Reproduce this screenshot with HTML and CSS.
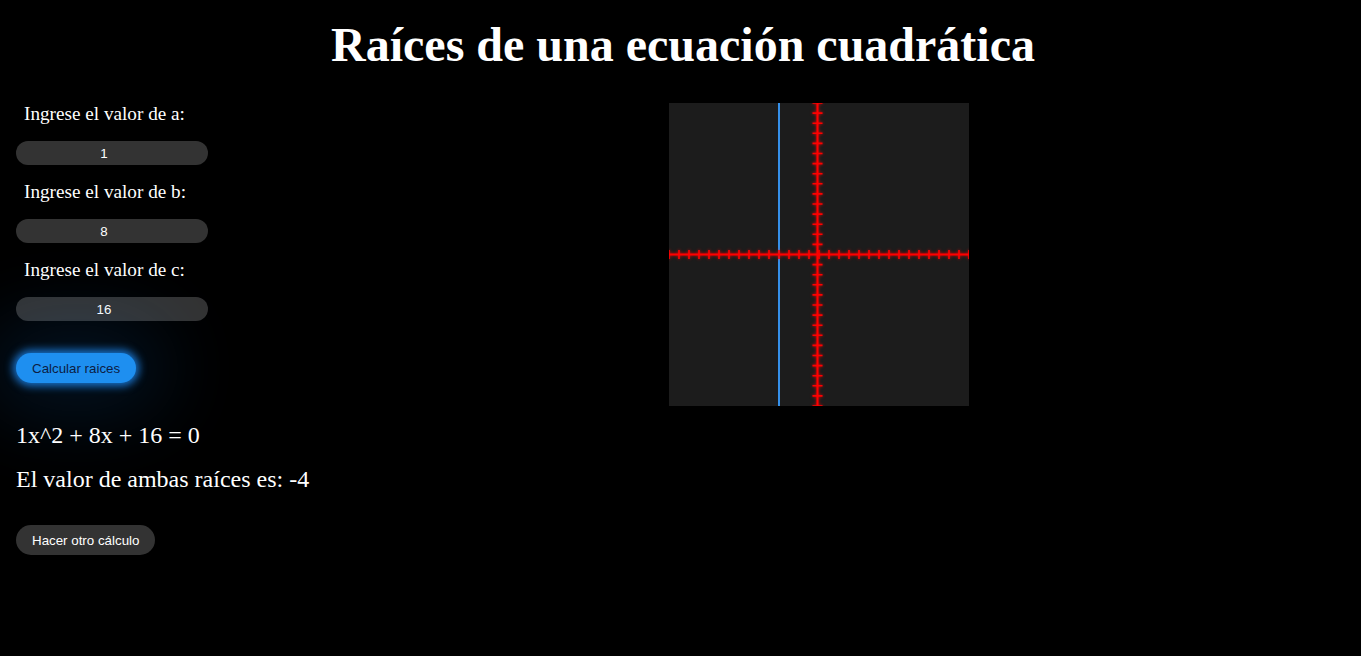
FILE: index.html
```html
<!DOCTYPE html>
<html lang="es">
<head>
<meta charset="utf-8">
<title>Raíces de una ecuación cuadrática</title>
<link rel="stylesheet" href="styles.css">
</head>
<body>
<h1 class="title">Raíces de una ecuación cuadrática</h1>
<div class="main">
  <div class="form">
    <label class="label">Ingrese el valor de a:</label>
    <input class="field" type="text" value="1">
    <label class="label">Ingrese el valor de b:</label>
    <input class="field" type="text" value="8">
    <label class="label">Ingrese el valor de c:</label>
    <input class="field" type="text" value="16">
    <button class="btn btn-calc">Calcular raices</button>
    <p class="eq">1x^2 + 8x + 16 = 0</p>
    <p class="result">El valor de ambas raíces es: -4</p>
    <button class="btn btn-again">Hacer otro cálculo</button>
  </div>
  <svg class="plot" width="300" height="303" viewBox="0 0 300 303">
    <rect class="plot-bg" x="0" y="0" width="300" height="303"/>
    <line class="root" x1="110" y1="0" x2="110" y2="303"/>
    <g class="axes">
      <line x1="0" y1="151.5" x2="300" y2="151.5"/>
      <line x1="148.5" y1="0" x2="148.5" y2="303"/>
      <path class="ticks" d="M0 147v9M10 147v9M20 147v9M30 147v9M40 147v9M50 147v9M60 147v9M70 147v9M80 147v9M90 147v9M100 147v9M110 147v9M120 147v9M130 147v9M140 147v9M150 147v9M160 147v9M170 147v9M180 147v9M190 147v9M200 147v9M210 147v9M220 147v9M230 147v9M240 147v9M250 147v9M260 147v9M270 147v9M280 147v9M290 147v9M300 147v9"/>
      <path class="ticks" d="M143.5 0h10M143.5 10.1h10M143.5 20.2h10M143.5 30.3h10M143.5 40.4h10M143.5 50.5h10M143.5 60.6h10M143.5 70.7h10M143.5 80.8h10M143.5 90.9h10M143.5 101h10M143.5 111.1h10M143.5 121.2h10M143.5 131.3h10M143.5 141.4h10M143.5 161.6h10M143.5 171.7h10M143.5 181.8h10M143.5 191.9h10M143.5 202h10M143.5 212.1h10M143.5 222.2h10M143.5 232.3h10M143.5 242.4h10M143.5 252.5h10M143.5 262.6h10M143.5 272.7h10M143.5 282.8h10M143.5 292.9h10M143.5 303h10"/>
    </g>
  </svg>
</div>
</body>
</html>
```

FILE: styles.css
```css
html, body {
  margin: 0;
  padding: 0;
  background: #000;
  color: #fff;
  font-family: "Liberation Serif", "Times New Roman", serif;
}

.title {
  margin: 0;
  padding-top: 15px;
  padding-left: 5px;
  font-size: 48px;
  line-height: 60px;
  font-weight: bold;
  text-align: center;
}

.main {
  display: flex;
  align-items: flex-start;
  margin-top: 28px;
  padding-left: 16px;
}

.form {
  display: flex;
  flex-direction: column;
  align-items: flex-start;
  width: 320px;
  flex: none;
}

.label {
  font-size: 19.2px;
  line-height: 22px;
  padding-left: 8px;
  margin-bottom: 16px;
}

.field {
  box-sizing: border-box;
  width: 192px;
  height: 24px;
  margin: 0 0 16px 0;
  padding: 0 16px 0 0;
  border: none;
  border-radius: 12px;
  background: #333;
  color: #fff;
  font-family: "Liberation Sans", Arial, sans-serif;
  font-size: 13.333px;
  text-align: center;
  outline: none;
}

.btn {
  height: 30px;
  padding: 0 16px;
  border: none;
  border-radius: 15px;
  font-family: "Liberation Sans", Arial, sans-serif;
  font-size: 13.333px;
  cursor: pointer;
}

.btn-calc {
  margin-top: 16px;
  background: #1e8ff0;
  color: #0c1d44;
  box-shadow: 0 0 8px 3px rgba(30, 144, 255, 0.8), 0 0 80px 30px rgba(30, 144, 255, 0.14);
}

.btn-again {
  margin-top: 32px;
  background: #333;
  color: #fff;
}

.eq,
.result {
  margin: 0;
  font-size: 24px;
  line-height: 28px;
}

.eq {
  margin-top: 38px;
}

.result {
  margin-top: 16px;
}

.plot {
  display: block;
  flex: none;
  margin-left: 333px;
}

.plot-bg {
  fill: #1c1c1c;
}

.root {
  stroke: #3590ea;
  stroke-width: 2;
}

.axes {
  stroke: #ff0000;
  stroke-width: 2;
  fill: none;
  filter: drop-shadow(0 0 1.5px rgba(255, 0, 0, 0.9));
}

.ticks {
  stroke-width: 1.6;
}
```
